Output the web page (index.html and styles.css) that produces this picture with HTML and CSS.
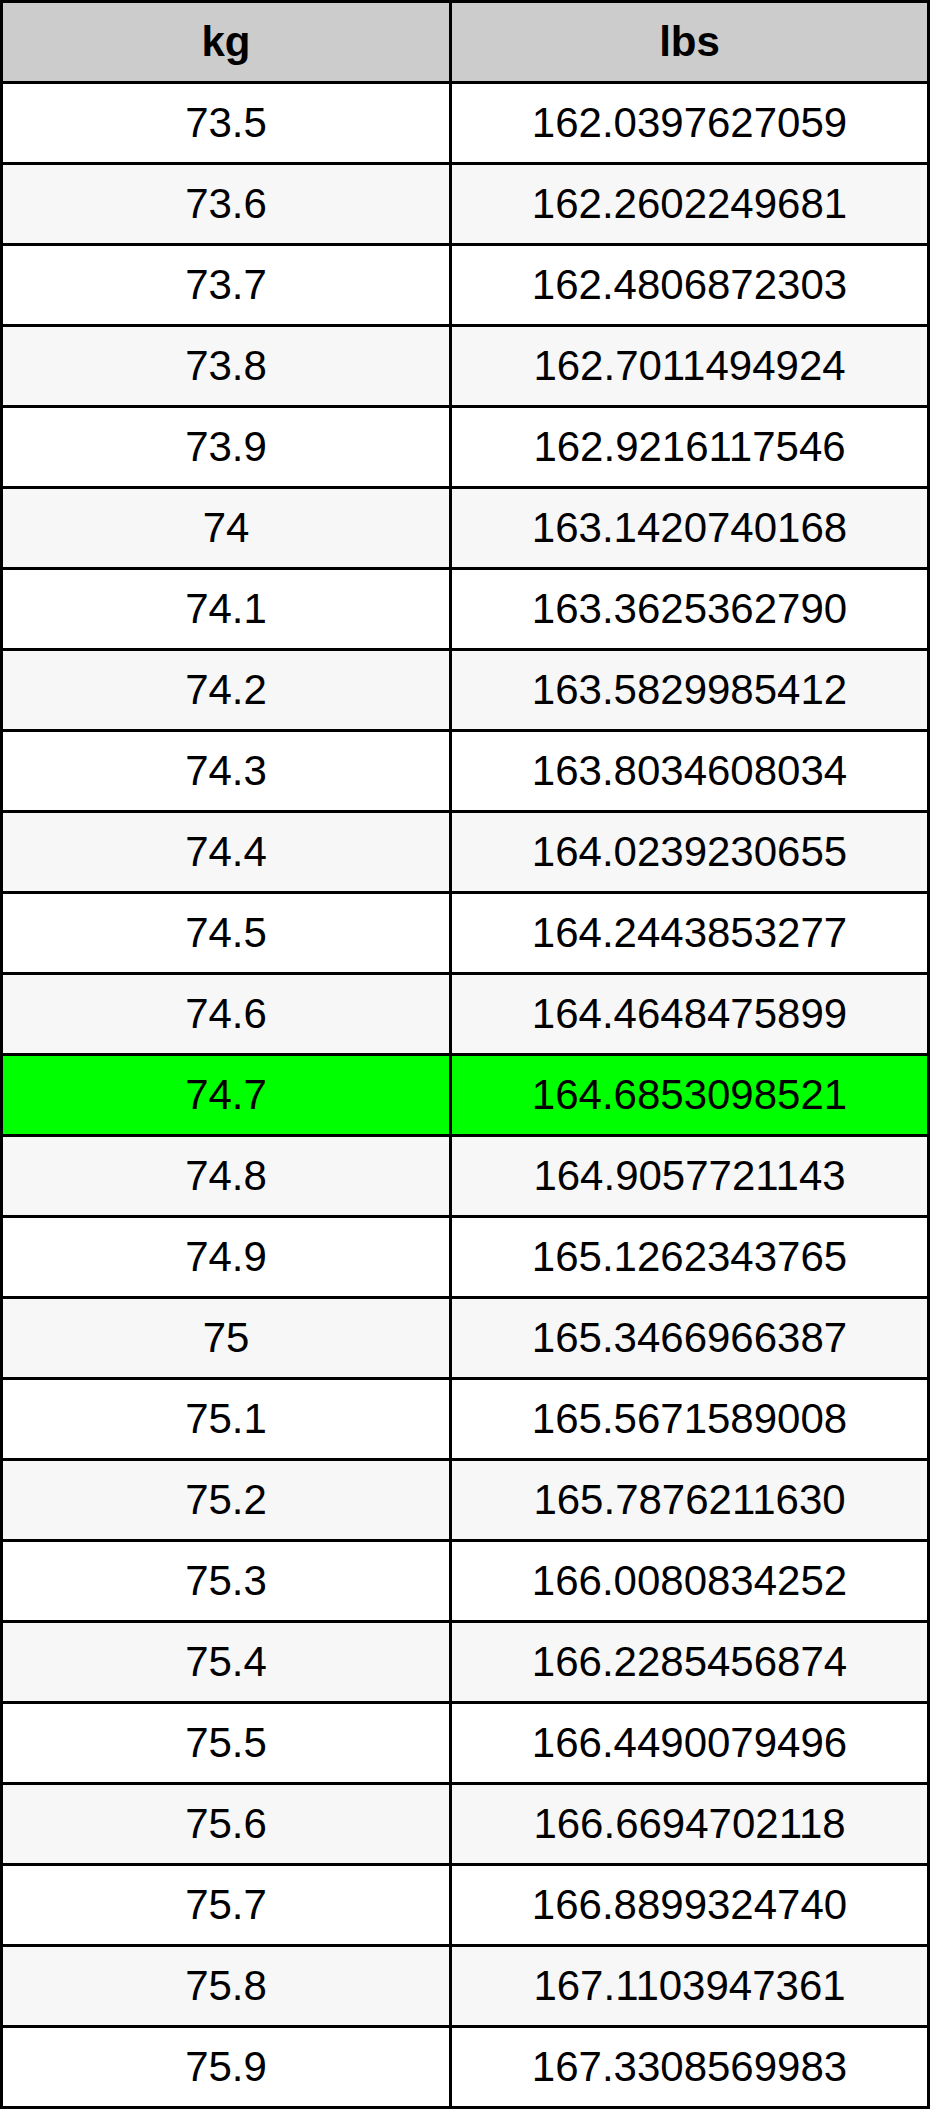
FILE: index.html
```html
<!DOCTYPE html>
<html>
<head>
<meta charset="utf-8">
<title>kg to lbs</title>
<link rel="stylesheet" href="styles.css">
</head>
<body>
<table class="conv">
<thead>
<tr><th class="c1">kg</th><th class="c2">lbs</th></tr>
</thead>
<tbody>
<tr><td>73.5</td><td>162.0397627059</td></tr>
<tr><td>73.6</td><td>162.2602249681</td></tr>
<tr><td>73.7</td><td>162.4806872303</td></tr>
<tr><td>73.8</td><td>162.7011494924</td></tr>
<tr><td>73.9</td><td>162.9216117546</td></tr>
<tr><td>74</td><td>163.1420740168</td></tr>
<tr><td>74.1</td><td>163.3625362790</td></tr>
<tr><td>74.2</td><td>163.5829985412</td></tr>
<tr><td>74.3</td><td>163.8034608034</td></tr>
<tr><td>74.4</td><td>164.0239230655</td></tr>
<tr><td>74.5</td><td>164.2443853277</td></tr>
<tr><td>74.6</td><td>164.4648475899</td></tr>
<tr class="hl"><td>74.7</td><td>164.6853098521</td></tr>
<tr><td>74.8</td><td>164.9057721143</td></tr>
<tr><td>74.9</td><td>165.1262343765</td></tr>
<tr><td>75</td><td>165.3466966387</td></tr>
<tr><td>75.1</td><td>165.5671589008</td></tr>
<tr><td>75.2</td><td>165.7876211630</td></tr>
<tr><td>75.3</td><td>166.0080834252</td></tr>
<tr><td>75.4</td><td>166.2285456874</td></tr>
<tr><td>75.5</td><td>166.4490079496</td></tr>
<tr><td>75.6</td><td>166.6694702118</td></tr>
<tr><td>75.7</td><td>166.8899324740</td></tr>
<tr><td>75.8</td><td>167.1103947361</td></tr>
<tr><td>75.9</td><td>167.3308569983</td></tr>
</tbody>
</table>
</body>
</html>
```
FILE: styles.css
```css
html, body {
  margin: 0;
  padding: 0;
  background: #ffffff;
}
.conv {
  width: 930px;
  table-layout: fixed;
  border-collapse: separate;
  border-spacing: 0;
  border-top: 3px solid #000;
  border-left: 3px solid #000;
  font-family: "Liberation Sans", Arial, sans-serif;
  font-size: 42px;
  color: #000;
}
.conv th,
.conv td {
  padding: 0;
  line-height: 78px;
  text-align: center;
  border-right: 3px solid #000;
  border-bottom: 3px solid #000;
  white-space: nowrap;
}
.conv th {
  background: #cccccc;
  font-weight: bold;
}
.conv .c1 {
  width: 446px;
}
.conv .c2 {
  width: 475px;
}
.conv tbody tr {
  background: #ffffff;
}
.conv tbody tr:nth-child(even) {
  background: #f7f7f7;
}
.conv tbody tr.hl {
  background: #00ff00;
}
```
